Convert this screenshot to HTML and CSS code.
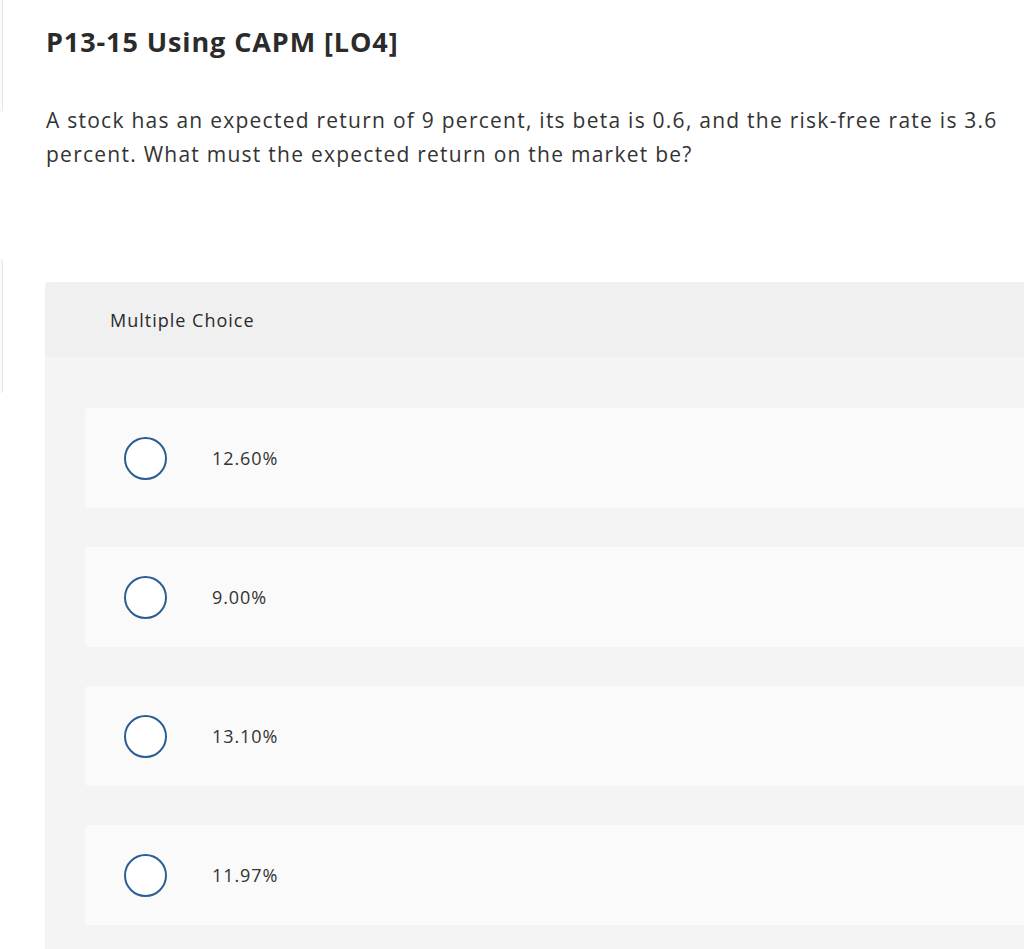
FILE: index.html
```html
<!DOCTYPE html>
<html lang="en">
<head>
<meta charset="utf-8">
<title>P13-15 Using CAPM</title>
<link rel="stylesheet" href="styles.css">
</head>
<body>
<div class="edge edge-top"></div>
<div class="edge edge-mid"></div>
<main class="question">
  <h1 class="title">P13-15 Using CAPM [LO4]</h1>
  <p class="prompt">A stock has an expected return of 9 percent, its beta is 0.6, and the risk-free rate is 3.6 percent. What must the expected return on the market be?</p>
  <section class="choices">
    <div class="choices-header">Multiple Choice</div>
    <div class="choices-body">
      <label class="option"><span class="radio"></span><span class="option-text">12.60%</span></label>
      <label class="option"><span class="radio"></span><span class="option-text">9.00%</span></label>
      <label class="option"><span class="radio"></span><span class="option-text">13.10%</span></label>
      <label class="option"><span class="radio"></span><span class="option-text">11.97%</span></label>
    </div>
  </section>
</main>
</body>
</html>
```

FILE: styles.css
```css
html, body {
  margin: 0;
  padding: 0;
  background: #ffffff;
  overflow: hidden;
}
body {
  font-family: "Open Sans", "Lato", sans-serif;
  color: #333333;
  width: 1024px;
  height: 949px;
  position: relative;
}
.edge {
  position: absolute;
  left: 0;
  width: 2px;
  border-right: 1px solid #e6e6e6;
  background: #fbfbfb;
}
.edge-top {
  top: 0;
  height: 112px;
  border-bottom-right-radius: 3px;
}
.edge-mid {
  top: 259px;
  height: 134px;
  border-top-right-radius: 3px;
  border-bottom-right-radius: 3px;
}
.question {
  padding: 24px 0 0 45px;
  width: 1060px;
}
.title {
  margin: 0 0 0 1px;
  font-size: 27px;
  line-height: 36px;
  font-weight: 700;
  letter-spacing: 0.9px;
  color: #2b2b2b;
}
.prompt {
  margin: 43px 0 0 1px;
  font-size: 21px;
  line-height: 34px;
  letter-spacing: 1.25px;
  color: #333333;
  width: 965px;
}
.choices {
  margin-top: 111px;
  background: #f4f4f4;
  border-top-left-radius: 4px;
}
.choices-header {
  background: #f0f0f0;
  height: 75px;
  display: flex;
  align-items: center;
  padding-left: 65px;
  font-size: 18px;
  letter-spacing: 1px;
  color: #2a2a2a;
  border-top-left-radius: 4px;
}
.choices-body {
  padding: 51px 0 30px 40px;
  display: flex;
  flex-direction: column;
  gap: 39px;
}
.option {
  display: flex;
  align-items: center;
  height: 100px;
  background: #fafafa;
  border-radius: 4px;
  padding-left: 39px;
}
.radio {
  width: 39px;
  height: 39px;
  border: 2px solid #2b5f93;
  border-radius: 50%;
  background: #ffffff;
  flex: none;
}
.option-text {
  margin-left: 45px;
  font-size: 18px;
  letter-spacing: 0.9px;
  color: #333333;
}
```
